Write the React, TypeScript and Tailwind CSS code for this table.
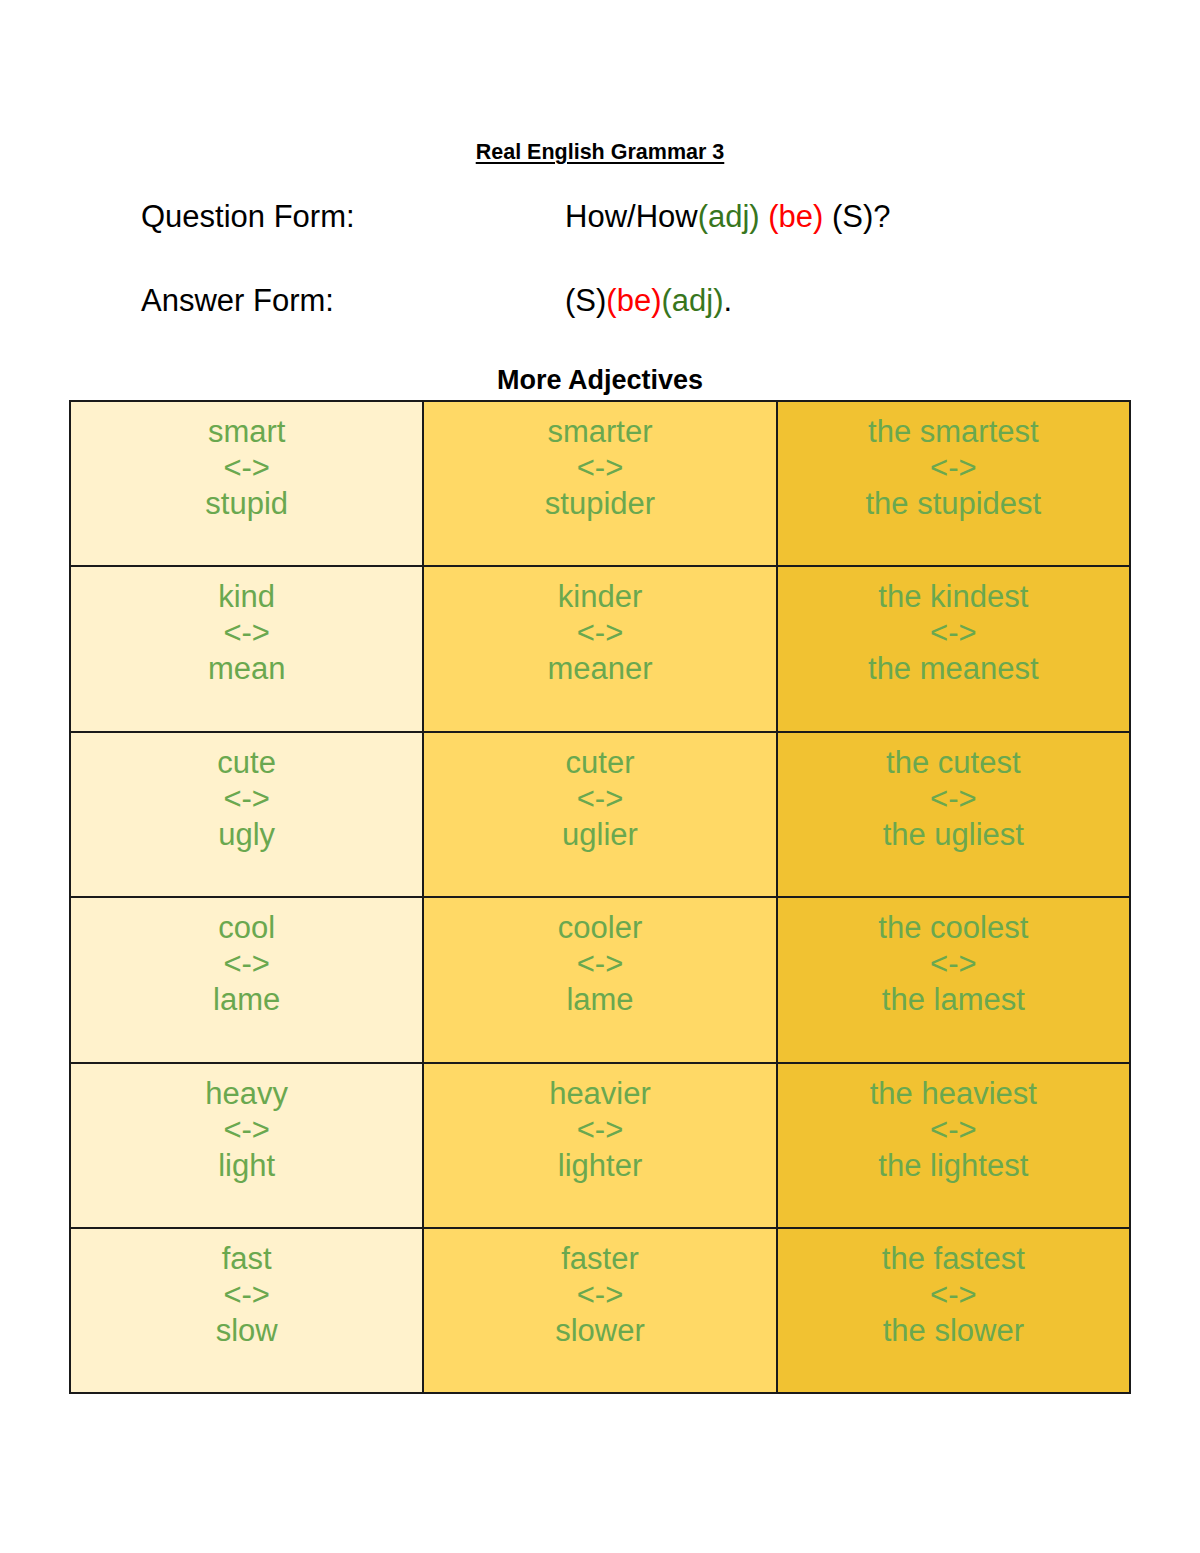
import React from 'react';

const rows = [
  ['smart', 'stupid', 'smarter', 'stupider', 'the smartest', 'the stupidest'],
  ['kind', 'mean', 'kinder', 'meaner', 'the kindest', 'the meanest'],
  ['cute', 'ugly', 'cuter', 'uglier', 'the cutest', 'the ugliest'],
  ['cool', 'lame', 'cooler', 'lame', 'the coolest', 'the lamest'],
  ['heavy', 'light', 'heavier', 'lighter', 'the heaviest', 'the lightest'],
  ['fast', 'slow', 'faster', 'slower', 'the fastest', 'the slower'],
];

const colBg = ['bg-[#fff2cc]', 'bg-[#ffd966]', 'bg-[#f1c232]'];

function Cell({ top, bottom, bg }: { top: string; bottom: string; bg: string }) {
  return (
    <td className={`${bg} border-2 border-[#1a1a1a] align-top h-[165.4px] p-0`}>
      <div className="flex flex-col items-center pt-[12px] text-[31px] leading-[36px] text-[#6aa84f]">
        <span>{top}</span>
        <span>{'<->'}</span>
        <span>{bottom}</span>
      </div>
    </td>
  );
}

export default function App() {
  return (
    <div className="w-[1200px] h-[1553px] bg-white text-black font-['Liberation_Sans',Arial,sans-serif]">
      <div className="pt-[140px] text-center">
        <span className="text-[21.5px] leading-[24px] font-bold underline underline-offset-[3px]">
          Real English Grammar 3
        </span>
      </div>

      <div className="mt-[33px] pl-[141px] flex text-[31px] leading-[36px]">
        <span className="w-[424px]">Question Form:</span>
        <span>
          How/How<span className="text-[#38761d]">(adj)</span> <span className="text-[#ff0000]">(be)</span> (S)?
        </span>
      </div>

      <div className="mt-[48px] pl-[141px] flex text-[31px] leading-[36px]">
        <span className="w-[424px]">Answer Form:</span>
        <span>
          (S)<span className="text-[#ff0000]">(be)</span>
          <span className="text-[#38761d]">(adj)</span>.
        </span>
      </div>

      <div className="mt-[45px] text-center text-[27px] leading-[32px] font-bold">More Adjectives</div>

      <div className="mt-[4px] px-[69px]">
        <table className="w-full table-fixed border-collapse border-2 border-[#1a1a1a]">
          <tbody>
            {rows.map((r, i) => (
              <tr key={i}>
                <Cell top={r[0]} bottom={r[1]} bg={colBg[0]} />
                <Cell top={r[2]} bottom={r[3]} bg={colBg[1]} />
                <Cell top={r[4]} bottom={r[5]} bg={colBg[2]} />
              </tr>
            ))}
          </tbody>
        </table>
      </div>
    </div>
  );
}
